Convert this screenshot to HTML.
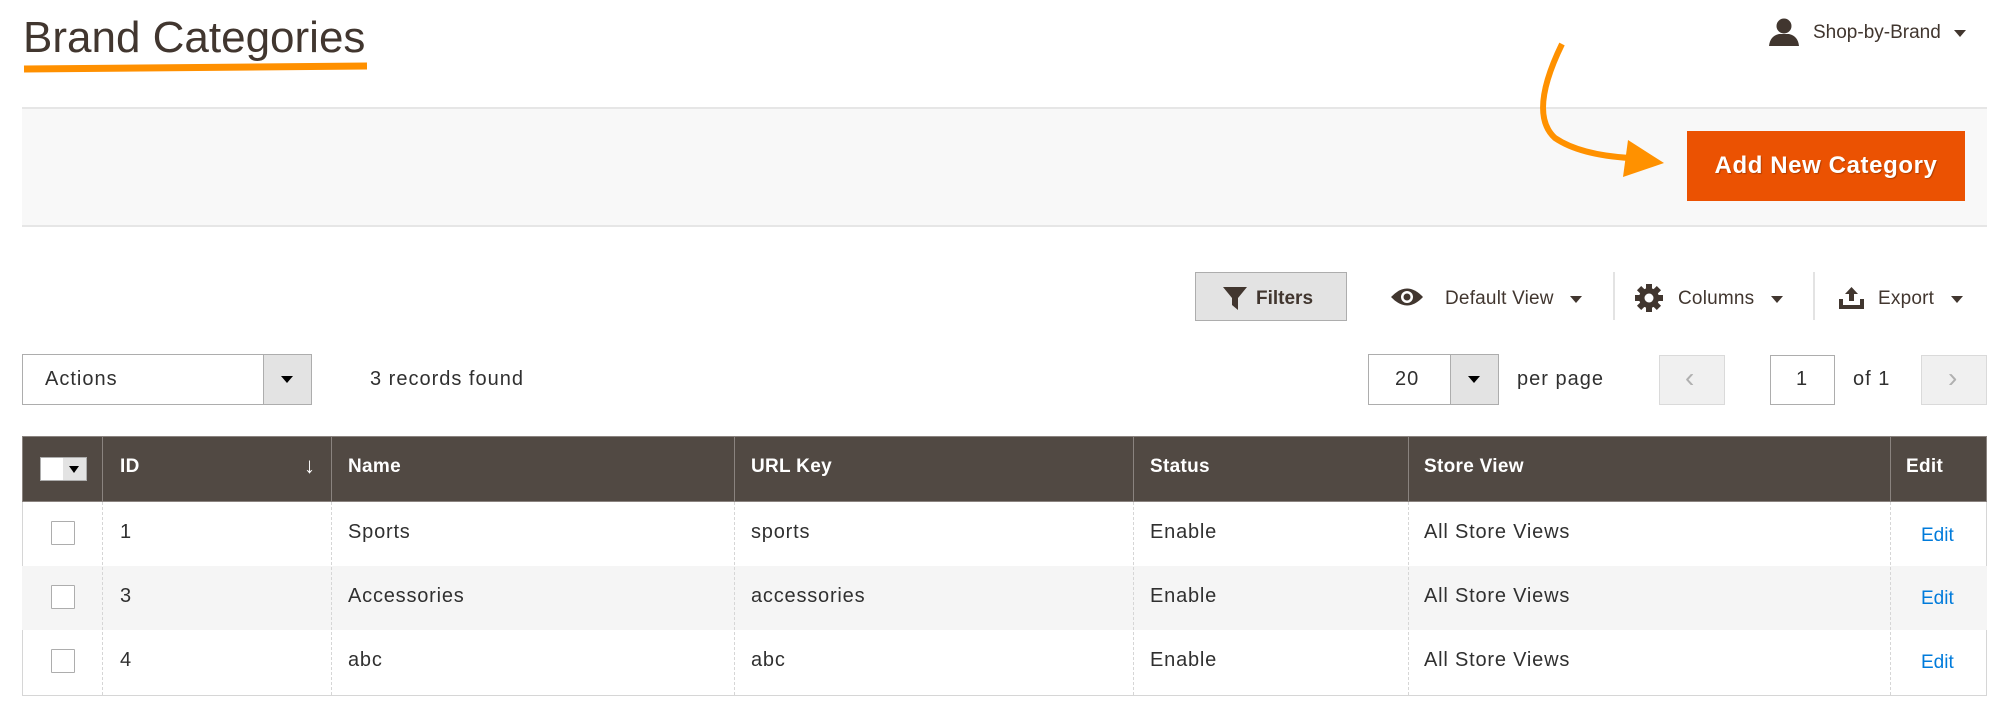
<!DOCTYPE html>
<html><head><meta charset="utf-8"><style>
*{margin:0;padding:0;box-sizing:border-box}
body{width:1999px;height:711px;background:#fff;font-family:"Liberation Sans",sans-serif;color:#41362f;position:relative;overflow:hidden}
.a{position:absolute;white-space:nowrap}
.caret{position:absolute;width:0;height:0;border-left:6px solid transparent;border-right:6px solid transparent;border-top:7px solid #41362f}
.vl{position:absolute;top:502px;height:193px;border-left:1px dashed #d6d6d6}
.hl{position:absolute;top:437px;height:65px;border-left:1px solid #8a837f}
.th{position:absolute;top:456px;color:#fff;font-weight:bold;font-size:19px;letter-spacing:0.3px}
.td{position:absolute;font-size:20px;color:#303030;letter-spacing:0.8px}
.t2{font-size:20px;color:#303030;letter-spacing:1px}
.cb{position:absolute;left:51px;width:24px;height:24px;border:1px solid #adadad;background:#fff;border-radius:1px}
.edit{position:absolute;left:1921px;font-size:19px;color:#007bdb}
</style></head><body>
<div class="a" style="left:23px;top:13px;font-size:44px;color:#41362f">Brand Categories</div>
<div class="a" style="left:24px;top:64px;width:343px;height:7px;background:#ff9000;transform:rotate(-0.5deg)"></div>

<svg class="a" style="left:1768px;top:17px" width="32" height="30" viewBox="0 0 32 30"><circle cx="16" cy="9" r="7.5" fill="#41362f"/><path d="M1 29 Q2 19 11 17 L21 17 Q30 19 31 29 Z" fill="#41362f"/></svg>
<div class="a" style="left:1813px;top:22px;font-size:19px;color:#41362f">Shop-by-Brand</div>
<div class="caret" style="left:1954px;top:30px"></div>

<div class="a" style="left:22px;top:107px;width:1965px;height:120px;background:#f8f8f8;border-top:2px solid #e6e6e6;border-bottom:2px solid #e6e6e6"></div>
<div class="a" style="left:1687px;top:131px;width:278px;height:70px;background:#eb5202"></div>
<div class="a" style="left:1687px;top:152px;width:278px;text-align:center;color:#fff;font-weight:bold;font-size:24px;letter-spacing:0.6px;text-shadow:1px 1px 1px rgba(0,0,0,.25)">Add New Category</div>
<svg class="a" style="left:1530px;top:30px" width="150" height="160" viewBox="1530 30 150 160"><path d="M1562 44 C1542 85 1535 120 1555 138 Q1580 155 1630 158" fill="none" stroke="#ff9100" stroke-width="6"/><path d="M1628 140 L1664 163 L1623 177 Z" fill="#ff9100"/></svg>

<div class="a" style="left:1195px;top:272px;width:152px;height:49px;background:#e3e3e3;border:1px solid #adadad"></div>
<svg class="a" style="left:1222px;top:285px" width="26" height="26" viewBox="0 0 26 26"><path d="M1 2 H25 L16 13 V25 L10 20 V13 Z" fill="#41362f"/></svg>
<div class="a" style="left:1256px;top:288px;font-size:19px;font-weight:bold;color:#41362f">Filters</div>
<svg class="a" style="left:1390px;top:286px" width="34" height="22" viewBox="0 0 34 22"><path d="M1 11 Q17 -6 33 11 Q17 28 1 11Z" fill="#41362f"/><circle cx="17" cy="11" r="6" fill="#fff"/><circle cx="17" cy="11" r="3.5" fill="#41362f"/></svg>
<div class="a" style="left:1445px;top:288px;font-size:19px;letter-spacing:0.2px">Default View</div>
<div class="caret" style="left:1570px;top:296px"></div>
<div class="a" style="left:1613px;top:272px;width:2px;height:48px;background:#e3e3e3"></div>
<svg class="a" style="left:1635px;top:284px" width="28" height="28" viewBox="0 0 28 28"><g fill="#41362f"><circle cx="14" cy="14" r="10"/><rect x="11" y="0" width="6" height="28"/><rect x="0" y="11" width="28" height="6"/><rect x="11" y="0" width="6" height="28" transform="rotate(45 14 14)"/><rect x="11" y="0" width="6" height="28" transform="rotate(-45 14 14)"/></g><circle cx="14" cy="14" r="4.5" fill="#fff"/></svg>
<div class="a" style="left:1678px;top:288px;font-size:19px;letter-spacing:0.2px">Columns</div>
<div class="caret" style="left:1771px;top:296px"></div>
<div class="a" style="left:1813px;top:272px;width:2px;height:48px;background:#e3e3e3"></div>
<svg class="a" style="left:1838px;top:287px" width="27" height="23" viewBox="0 0 27 23"><path d="M13.5 0 L20 7 H16 V14 H11 V7 H7 Z" fill="#41362f"/><path d="M1 12 V22 H26 V12 H22 V18 H5 V12 Z" fill="#41362f"/></svg>
<div class="a" style="left:1878px;top:288px;font-size:19px;letter-spacing:0.2px">Export</div>
<div class="caret" style="left:1951px;top:296px"></div>

<div class="a" style="left:22px;top:354px;width:290px;height:51px;border:1px solid #adadad;background:#fff"></div>
<div class="a" style="left:263px;top:355px;width:48px;height:49px;background:#e3e3e3;border-left:1px solid #adadad"></div>
<div class="caret" style="left:281px;top:376px;border-top-color:#000"></div>
<div class="a t2" style="left:45px;top:368px">Actions</div>
<div class="a t2" style="left:370px;top:368px">3 records found</div>

<div class="a" style="left:1368px;top:354px;width:131px;height:51px;border:1px solid #adadad;background:#fff"></div>
<div class="a" style="left:1450px;top:355px;width:48px;height:49px;background:#e3e3e3;border-left:1px solid #adadad"></div>
<div class="caret" style="left:1468px;top:376px;border-top-color:#000"></div>
<div class="a t2" style="left:1395px;top:368px">20</div>
<div class="a t2" style="left:1517px;top:368px">per page</div>
<div class="a" style="left:1659px;top:355px;width:66px;height:50px;background:#f0f0f0;border:1px solid #dadada"></div>
<div class="a" style="left:1685px;top:362px;font-size:28px;color:#b0b0b0">&#8249;</div>
<div class="a" style="left:1770px;top:355px;width:65px;height:50px;background:#fff;border:1px solid #adadad"></div>
<div class="a t2" style="left:1796px;top:368px">1</div>
<div class="a t2" style="left:1853px;top:368px">of 1</div>
<div class="a" style="left:1921px;top:355px;width:66px;height:50px;background:#f0f0f0;border:1px solid #dadada"></div>
<div class="a" style="left:1948px;top:362px;font-size:28px;color:#b0b0b0">&#8250;</div>

<div class="a" style="left:22px;top:436px;width:1965px;height:260px;border:1px solid #d6d6d6"></div>
<div class="a" style="left:22px;top:436px;width:1965px;height:66px;background:#514943;border:1px solid #8a837f"></div>
<div class="a" style="left:22px;top:566px;width:1965px;height:64px;background:#f5f5f5"></div>
<div class="hl" style="left:102px"></div><div class="hl" style="left:331px"></div><div class="hl" style="left:734px"></div><div class="hl" style="left:1133px"></div><div class="hl" style="left:1408px"></div><div class="hl" style="left:1890px"></div>
<div class="vl" style="left:102px"></div><div class="vl" style="left:331px"></div><div class="vl" style="left:734px"></div><div class="vl" style="left:1133px"></div><div class="vl" style="left:1408px"></div><div class="vl" style="left:1890px"></div>
<div class="a" style="left:40px;top:457px;width:47px;height:24px;background:#fff;border:1px solid #adadad"></div>
<div class="a" style="left:63px;top:458px;width:23px;height:22px;background:#e3e3e3"></div>
<div class="caret" style="left:69px;top:466px;border-left-width:5px;border-right-width:5px;border-top-color:#000"></div>
<div class="th" style="left:120px">ID</div>
<div class="th" style="left:304px;font-weight:normal;font-size:22px;top:453px">&#8595;</div>
<div class="th" style="left:348px">Name</div>
<div class="th" style="left:751px">URL Key</div>
<div class="th" style="left:1150px">Status</div>
<div class="th" style="left:1424px">Store View</div>
<div class="th" style="left:1906px">Edit</div>

<div class="cb" style="top:521px"></div>
<div class="td" style="left:120px;top:521px">1</div><div class="td" style="left:348px;top:521px">Sports</div><div class="td" style="left:751px;top:521px">sports</div><div class="td" style="left:1150px;top:521px">Enable</div><div class="td" style="left:1424px;top:521px">All Store Views</div><div class="edit" style="top:525px">Edit</div>
<div class="cb" style="top:585px"></div>
<div class="td" style="left:120px;top:585px">3</div><div class="td" style="left:348px;top:585px">Accessories</div><div class="td" style="left:751px;top:585px">accessories</div><div class="td" style="left:1150px;top:585px">Enable</div><div class="td" style="left:1424px;top:585px">All Store Views</div><div class="edit" style="top:588px">Edit</div>
<div class="cb" style="top:649px"></div>
<div class="td" style="left:120px;top:649px">4</div><div class="td" style="left:348px;top:649px">abc</div><div class="td" style="left:751px;top:649px">abc</div><div class="td" style="left:1150px;top:649px">Enable</div><div class="td" style="left:1424px;top:649px">All Store Views</div><div class="edit" style="top:652px">Edit</div>
</body></html>
